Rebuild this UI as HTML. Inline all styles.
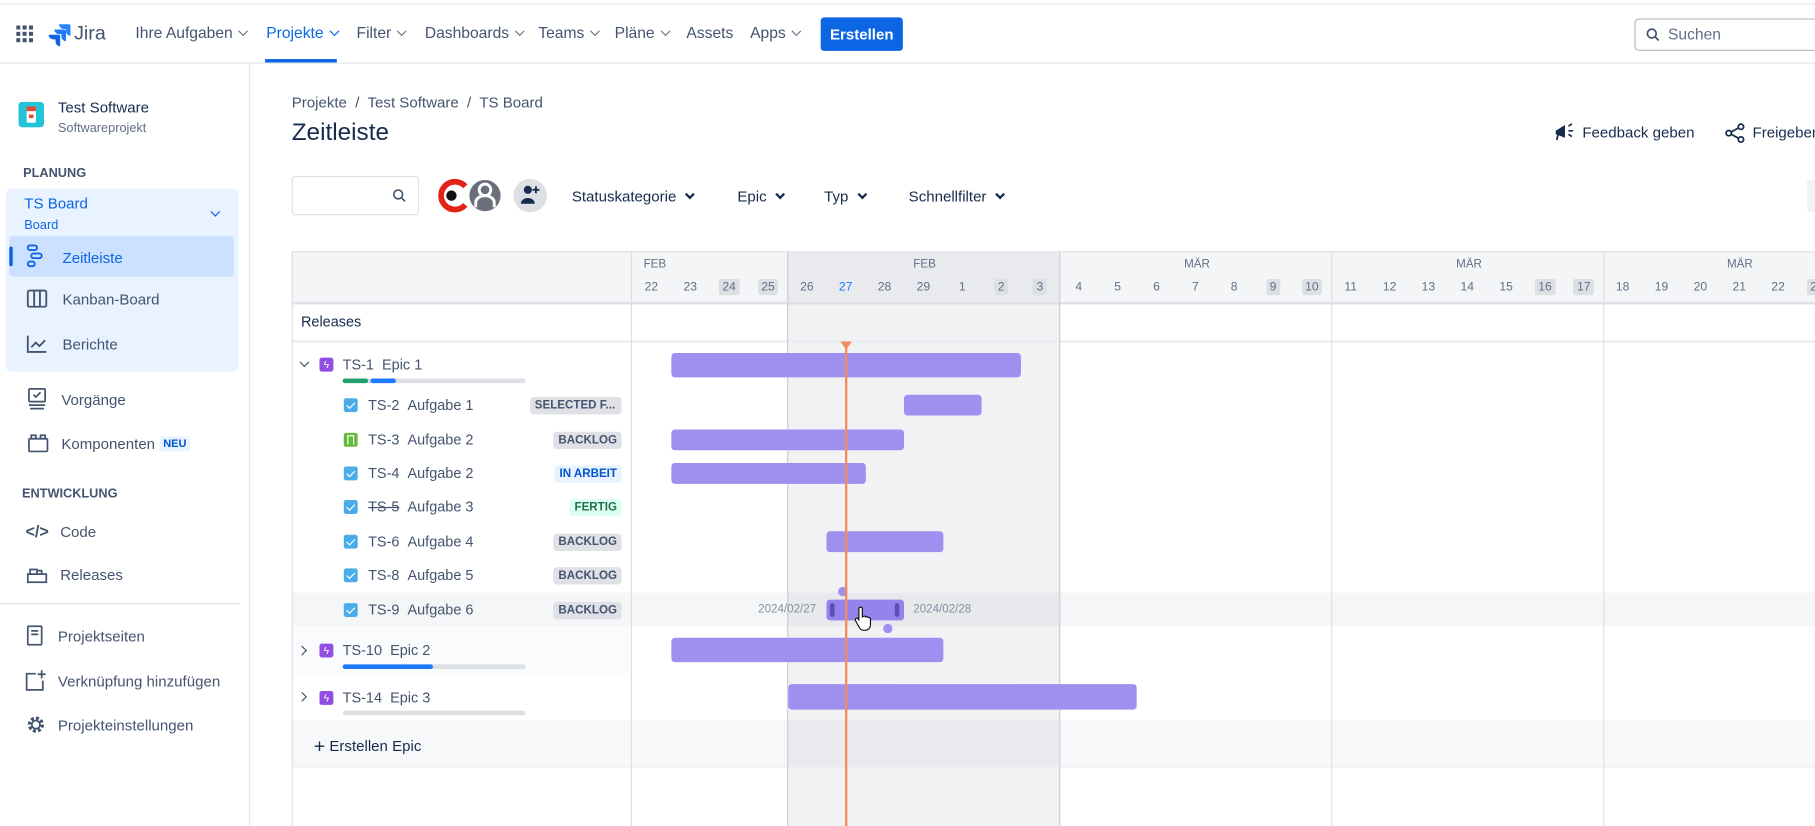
<!DOCTYPE html>
<html><head><meta charset="utf-8">
<style>
*{box-sizing:border-box;margin:0;padding:0}
html,body{width:1815px;height:826px;overflow:hidden;background:#fff}
#s{position:absolute;left:0;top:0;width:1568px;height:714px;transform:scale(1.15753);transform-origin:0 0;font-family:"Liberation Sans",sans-serif;color:#44546f;font-size:13px}
.a{position:absolute;white-space:nowrap}
.nav{top:21px;font-size:13.5px;color:#44546f}
.chev{display:inline-block;width:6px;height:6px;border-right:1.3px solid #6b778c;border-bottom:1.3px solid #6b778c;transform:rotate(45deg);margin-left:6px;position:relative;top:-3px}
.ch{position:absolute;width:6px;height:6px;border-right:1.8px solid #44546f;border-bottom:1.8px solid #44546f;transform:rotate(45deg)}
.sb{font-size:13px;color:#44546f}
.days{position:absolute;left:546px;top:240px;display:flex}
.days span{width:33.57px;text-align:center;font-size:10.5px;color:#626f86;line-height:17px}
.days span.w b{background:#dcdfe4;font-weight:normal;padding:1px 3px;border-radius:2px}
.vl{position:absolute;top:217px;width:1px;height:497px;background:#dcdfe4}
.bar{position:absolute;background:#9f8fef;border-radius:3px}
.tk{position:absolute;left:297px;width:12px;height:12px;background:#4bade8;border-radius:2px}
.tk:after{content:"";position:absolute;left:4px;top:1.5px;width:3px;height:6px;border-right:1.6px solid #fff;border-bottom:1.6px solid #fff;transform:rotate(45deg)}
.tt{position:absolute;left:318px;font-size:12.5px;color:#44546f}
.bd{position:absolute;right:1031px;font-size:10px;font-weight:bold;background:#dfe1e6;color:#44546f;padding:2px 4px;border-radius:3px}
.ep{position:absolute;left:276px;width:12px;height:12px;background:#904ee2;border-radius:2px;color:#fff;font-size:9px;text-align:center;line-height:12px}
.pg{position:absolute;left:296px;width:158px;height:4px;background:#dcdfe4;border-radius:2px}
</style></head><body><div id="s">
<div class="a" style="left:0;top:3px;width:1568px;height:1px;background:#e4e6ea"></div>
<div class="a" style="left:0;top:54px;width:1568px;height:1px;background:#e4e6ea"></div>
<svg class="a" style="left:14px;top:22px" width="15" height="15"><g fill="#44546f"><rect x="0" y="0" width="3.5" height="3.5"/><rect x="5.5" y="0" width="3.5" height="3.5"/><rect x="11" y="0" width="3.5" height="3.5"/><rect x="0" y="5.5" width="3.5" height="3.5"/><rect x="5.5" y="5.5" width="3.5" height="3.5"/><rect x="11" y="5.5" width="3.5" height="3.5"/><rect x="0" y="11" width="3.5" height="3.5"/><rect x="5.5" y="11" width="3.5" height="3.5"/><rect x="11" y="11" width="3.5" height="3.5"/></g></svg>
<svg class="a" style="left:41px;top:20px" width="20" height="20" viewBox="0 0 20 20"><path d="M19 1H10a4 4 0 0 0 4 4h2v2a4 4 0 0 0 4 4V2z" fill="#2684ff"/><path d="M14.5 5.5H6a4 4 0 0 0 4 4h2v2a4 4 0 0 0 4 4V6z" fill="#1d7afc"/><path d="M10 10H1a4 4 0 0 0 4 4h2v2a4 4 0 0 0 4 4V11z" fill="#0c66e4"/></svg>
<div class="a" style="left:64px;top:19px;font-size:17px;color:#44546f">Jira</div>
<div class="a nav" style="left:117px">Ihre Aufgaben<i class="chev"></i></div>
<div class="a nav" style="left:230px;color:#0c66e4">Projekte<i class="chev" style="border-color:#0c66e4"></i></div>
<div class="a" style="left:229px;top:51px;width:62px;height:3px;background:#0c66e4"></div>
<div class="a nav" style="left:308px">Filter<i class="chev"></i></div>
<div class="a nav" style="left:367px">Dashboards<i class="chev"></i></div>
<div class="a nav" style="left:465px">Teams<i class="chev"></i></div>
<div class="a nav" style="left:531px">Pläne<i class="chev"></i></div>
<div class="a nav" style="left:593px">Assets</div>
<div class="a nav" style="left:648px">Apps<i class="chev"></i></div>
<div class="a" style="left:709px;top:15px;width:71px;height:29px;background:#0c66e4;border-radius:3px;color:#fff;font-weight:bold;font-size:13px;text-align:center;line-height:29px">Erstellen</div>
<div class="a" style="left:1412px;top:16px;width:170px;height:28px;border:1.5px solid #b3b9c4;border-radius:4px"></div>
<svg class="a" style="left:1422px;top:24px" width="12" height="12"><circle cx="5" cy="5" r="3.8" fill="none" stroke="#44546f" stroke-width="1.5"/><line x1="8" y1="8" x2="11" y2="11" stroke="#44546f" stroke-width="1.5"/></svg>
<div class="a" style="left:1441px;top:22px;font-size:13.5px;color:#626f86">Suchen</div>

<div class="a" style="left:215px;top:55px;width:1px;height:659px;background:#e4e6ea"></div>
<svg class="a" style="left:16px;top:88px" width="22" height="22"><rect width="22" height="22" rx="3" fill="#22c4d8"/><rect x="7" y="4" width="8" height="14" rx="1" fill="#fff"/><rect x="7" y="4" width="8" height="4" fill="#e34935"/><rect x="9" y="11" width="4" height="3" fill="#e34935"/></svg>
<div class="a" style="left:50px;top:85px;font-size:13px;color:#172b4d">Test Software</div>
<div class="a" style="left:50px;top:105px;font-size:11px;color:#626f86">Softwareprojekt</div>
<div class="a" style="left:20px;top:144px;font-size:11px;font-weight:bold;color:#44546f">PLANUNG</div>
<div class="a" style="left:5px;top:163px;width:201px;height:158px;background:#e9f2ff;border-radius:5px"></div>
<div class="a" style="left:21px;top:168px;font-size:13px;color:#0c66e4">TS Board</div>
<div class="a" style="left:21px;top:189px;font-size:11px;color:#0c66e4">Board</div>
<i class="ch" style="left:183px;top:180px;border-color:#0c66e4"></i>
<div class="a" style="left:8px;top:204px;width:194px;height:35px;background:#cce0ff;border-radius:3px"></div>
<div class="a" style="left:8px;top:213px;width:3px;height:17px;background:#0c66e4;border-radius:2px"></div>
<svg class="a" style="left:23px;top:211px" width="16" height="20"><g fill="none" stroke="#0c66e4" stroke-width="1.6"><rect x="1" y="1" width="8" height="4" rx="2"/><rect x="4" y="8" width="9" height="4" rx="2"/><rect x="1" y="15" width="6" height="4" rx="2"/></g></svg>
<div class="a sb" style="left:54px;top:215px;color:#0c66e4">Zeitleiste</div>
<svg class="a" style="left:23px;top:250px" width="18" height="16"><g fill="none" stroke="#44546f" stroke-width="1.6"><rect x="1" y="1" width="16" height="14" rx="1.5"/><line x1="6.5" y1="1" x2="6.5" y2="15"/><line x1="11.5" y1="1" x2="11.5" y2="15"/></g></svg>
<div class="a sb" style="left:54px;top:251px">Kanban-Board</div>
<svg class="a" style="left:23px;top:289px" width="18" height="16"><g fill="none" stroke="#44546f" stroke-width="1.6"><path d="M1 1v14h16"/><path d="M4 11l4-4 3 3 5-5"/></g></svg>
<div class="a sb" style="left:54px;top:290px">Berichte</div>
<svg class="a" style="left:24px;top:335px" width="16" height="20"><g fill="none" stroke="#44546f" stroke-width="1.5"><rect x="1" y="1" width="14" height="11" rx="1"/><path d="M5 6l2 2 4-4"/><line x1="1" y1="15" x2="15" y2="15"/><line x1="2" y1="18" x2="14" y2="18"/></g></svg>
<div class="a sb" style="left:53px;top:338px">Vorgänge</div>
<svg class="a" style="left:24px;top:375px" width="18" height="16"><g fill="none" stroke="#44546f" stroke-width="1.5"><rect x="1" y="4" width="16" height="11" rx="1"/><rect x="3" y="1" width="4" height="3"/><rect x="11" y="1" width="4" height="3"/></g></svg>
<div class="a sb" style="left:53px;top:376px">Komponenten</div>
<div class="a" style="left:138px;top:377px;font-size:9.5px;font-weight:bold;color:#0055cc;background:#e9f2ff;padding:1px 3px;border-radius:2px">NEU</div>
<div class="a" style="left:19px;top:421px;font-size:11px;font-weight:bold;color:#44546f">ENTWICKLUNG</div>
<div class="a" style="left:22px;top:451px;font-size:14px;color:#44546f;font-weight:bold">&lt;/&gt;</div>
<div class="a sb" style="left:52px;top:452px">Code</div>
<svg class="a" style="left:23px;top:488px" width="18" height="16"><g fill="none" stroke="#44546f" stroke-width="1.5"><path d="M1 8h16v7H1z"/><path d="M3 8V4h6v4"/><path d="M9 5h4v3"/></g></svg>
<div class="a sb" style="left:52px;top:489px">Releases</div>
<div class="a" style="left:0;top:521px;width:207px;height:1px;background:#dcdfe4"></div>
<svg class="a" style="left:23px;top:540px" width="14" height="18"><g fill="none" stroke="#44546f" stroke-width="1.5"><rect x="1" y="1" width="12" height="16" rx="1"/><line x1="4" y1="5" x2="10" y2="5"/><line x1="4" y1="8" x2="10" y2="8"/></g></svg>
<div class="a sb" style="left:50px;top:542px">Projektseiten</div>
<svg class="a" style="left:21px;top:578px" width="20" height="20"><g fill="none" stroke="#44546f" stroke-width="1.5"><path d="M10 4H2v14h14v-8"/><path d="M15 1v7M11.5 4.5h7"/></g></svg>
<div class="a sb" style="left:50px;top:581px">Verknüpfung hinzufügen</div>
<svg class="a" style="left:22px;top:617px" width="18" height="18"><circle cx="9" cy="9" r="5.5" fill="none" stroke="#44546f" stroke-width="3" stroke-dasharray="2.5 1.8"/><circle cx="9" cy="9" r="3.5" fill="none" stroke="#44546f" stroke-width="1.5"/></svg>
<div class="a sb" style="left:50px;top:619px">Projekteinstellungen</div>

<div class="a" style="left:252px;top:81px;font-size:13px;color:#44546f">Projekte &nbsp;/&nbsp; Test Software &nbsp;/&nbsp; TS Board</div>
<div class="a" style="left:252px;top:103px;font-size:21px;color:#172b4d">Zeitleiste</div>
<svg class="a" style="left:1342px;top:106px" width="20" height="17"><path d="M2 7l8-5v11L2 10z" fill="#172b4d"/><path d="M4 10l-1 5" stroke="#172b4d" stroke-width="1.5"/><path d="M13 3l3-2M13 7h4M13 10l3 2" stroke="#172b4d" stroke-width="1.4"/></svg>
<div class="a" style="left:1367px;top:107px;font-size:13px;color:#172b4d">Feedback geben</div>
<svg class="a" style="left:1490px;top:106px" width="18" height="18"><g fill="none" stroke="#172b4d" stroke-width="1.5"><circle cx="14" cy="3.5" r="2.3"/><circle cx="3.5" cy="9" r="2.3"/><circle cx="14" cy="14.5" r="2.3"/><path d="M5.5 8l6.5-3.5M5.5 10l6.5 3.5"/></g></svg>
<div class="a" style="left:1514px;top:107px;font-size:13px;color:#172b4d">Freigeben</div>

<div class="a" style="left:252px;top:152px;width:110px;height:34px;border:1.5px solid #dcdfe4;border-radius:3px"></div>
<svg class="a" style="left:339px;top:163px" width="12" height="12"><circle cx="5" cy="5" r="3.8" fill="none" stroke="#44546f" stroke-width="1.4"/><line x1="8" y1="8" x2="11" y2="11" stroke="#44546f" stroke-width="1.4"/></svg>
<svg class="a" style="left:374px;top:153px" width="100" height="32"><path d="M28 8A12 12 0 1 0 28 24" fill="none" stroke="#e2231a" stroke-width="5"/><circle cx="16" cy="16" r="4.5" fill="#111"/><circle cx="45" cy="16" r="15" fill="#fff"/><circle cx="45" cy="16" r="13.5" fill="#6b6f7c"/><circle cx="45" cy="11" r="5" fill="none" stroke="#fff" stroke-width="2.5"/><path d="M37 26v-4a8 6 0 0 1 16 0v4" fill="none" stroke="#fff" stroke-width="2.5"/><circle cx="84" cy="16" r="14.5" fill="#dcdfe4"/><circle cx="82" cy="11" r="3.5" fill="#172b4d"/><path d="M76 23a6 5 0 0 1 12 0z" fill="#172b4d"/><path d="M89 8v6M86 11h6" stroke="#172b4d" stroke-width="1.6"/></svg>
<div class="a" style="left:494px;top:162px;font-size:13px;color:#172b4d">Statuskategorie<i class="chev" style="border-color:#172b4d;margin-left:9px;border-width:2px"></i></div>
<div class="a" style="left:637px;top:162px;font-size:13px;color:#172b4d">Epic<i class="chev" style="border-color:#172b4d;margin-left:9px;border-width:2px"></i></div>
<div class="a" style="left:712px;top:162px;font-size:13px;color:#172b4d">Typ<i class="chev" style="border-color:#172b4d;margin-left:9px;border-width:2px"></i></div>
<div class="a" style="left:785px;top:162px;font-size:13px;color:#172b4d">Schnellfilter<i class="chev" style="border-color:#172b4d;margin-left:9px;border-width:2px"></i></div>
<div class="a" style="left:1561px;top:155px;width:10px;height:28px;background:#f1f2f4;border-radius:3px"></div>

<div class="a" style="left:252px;top:217px;width:1316px;height:45px;background:#f4f5f7;border-top:1px solid #dcdfe4;border-left:1px solid #dcdfe4"></div>
<div class="a" style="left:680px;top:217px;width:235px;height:45px;background:#e9eaee"></div>
<div class="a" style="left:680px;top:262px;width:235px;height:452px;background:#f1f2f4"></div>
<div class="a" style="left:252px;top:512px;width:1316px;height:29px;background:rgba(9,30,66,0.04)"></div>
<div class="a" style="left:252px;top:541px;width:293px;height:41px;background:#fafbfc"></div>
<div class="a" style="left:252px;top:622px;width:1316px;height:40px;background:rgba(9,30,66,0.03)"></div>
<div class="a" style="left:252px;top:261px;width:1316px;height:1.5px;background:#dcdfe4"></div>
<div class="a" style="left:252px;top:294px;width:1316px;height:1.5px;background:#ebecf0"></div>
<div class="a" style="left:252px;top:662px;width:1316px;height:1px;background:#ebecf0"></div>
<div class="a" style="left:252px;top:217px;width:1px;height:497px;background:#dcdfe4"></div>
<div class="vl" style="left:545px"></div>
<div class="vl" style="left:680px;background:#c9ccd3"></div>
<div class="vl" style="left:915px;background:#c9ccd3"></div>
<div class="vl" style="left:1150px"></div>
<div class="vl" style="left:1385px"></div>

<div class="a" style="left:556px;top:223px;font-size:10px;color:#626f86">FEB</div>
<div class="a" style="left:789px;top:223px;font-size:10px;color:#626f86">FEB</div>
<div class="a" style="left:1023px;top:223px;font-size:10px;color:#626f86">MÄR</div>
<div class="a" style="left:1258px;top:223px;font-size:10px;color:#626f86">MÄR</div>
<div class="a" style="left:1492px;top:223px;font-size:10px;color:#626f86">MÄR</div>
<div class="days"><span>22</span><span>23</span><span class="w"><b>24</b></span><span class="w"><b>25</b></span><span>26</span><span style="color:#1d7afc">27</span><span>28</span><span>29</span><span>1</span><span class="w"><b>2</b></span><span class="w"><b>3</b></span><span>4</span><span>5</span><span>6</span><span>7</span><span>8</span><span class="w"><b>9</b></span><span class="w"><b>10</b></span><span>11</span><span>12</span><span>13</span><span>14</span><span>15</span><span class="w"><b>16</b></span><span class="w"><b>17</b></span><span>18</span><span>19</span><span>20</span><span>21</span><span>22</span><span class="w"><b>23</b></span></div>

<div class="a" style="left:260px;top:271px;font-size:12.5px;color:#172b4d">Releases</div>

<i class="ch" style="left:260px;top:310px"></i>
<div class="ep" style="top:309px">ϟ</div>
<div class="a" style="left:296px;top:308px;font-size:12.5px">TS-1 &nbsp;Epic 1</div>
<div class="pg" style="top:327px"></div>
<div class="a" style="left:296px;top:327px;width:22px;height:4px;background:#22a06b;border-radius:2px"></div>
<div class="a" style="left:320px;top:327px;width:22px;height:4px;background:#1d7afc;border-radius:2px"></div>

<div class="tk" style="top:344px"></div><div class="tt" style="top:343px">TS-2 &nbsp;Aufgabe 1</div><div class="bd" style="top:343px;width:79px">SELECTED F...</div>
<div class="a" style="left:297px;top:374px;width:12px;height:12px;background:#63ba3c;border-radius:2px"><div style="position:absolute;left:3px;top:2px;width:6px;height:8px;border:1.5px solid #fff;border-bottom:none"></div></div>
<div class="tt" style="top:373px">TS-3 &nbsp;Aufgabe 2</div><div class="bd" style="top:373px">BACKLOG</div>
<div class="tk" style="top:403px"></div><div class="tt" style="top:402px">TS-4 &nbsp;Aufgabe 2</div><div class="bd" style="top:402px;background:#e9f2ff;color:#0055cc">IN ARBEIT</div>
<div class="tk" style="top:432px"></div><div class="tt" style="top:431px"><s>TS-5</s> &nbsp;Aufgabe 3</div><div class="bd" style="top:431px;background:#dcfff1;color:#216e4e">FERTIG</div>
<div class="tk" style="top:462px"></div><div class="tt" style="top:461px">TS-6 &nbsp;Aufgabe 4</div><div class="bd" style="top:461px">BACKLOG</div>
<div class="tk" style="top:491px"></div><div class="tt" style="top:490px">TS-8 &nbsp;Aufgabe 5</div><div class="bd" style="top:490px">BACKLOG</div>
<div class="tk" style="top:521px"></div><div class="tt" style="top:520px">TS-9 &nbsp;Aufgabe 6</div><div class="bd" style="top:520px">BACKLOG</div>

<i class="ch" style="left:258px;top:559px;transform:rotate(-45deg)"></i>
<div class="ep" style="top:556px">ϟ</div>
<div class="a" style="left:296px;top:555px;font-size:12.5px">TS-10 &nbsp;Epic 2</div>
<div class="pg" style="top:574px"></div>
<div class="a" style="left:296px;top:574px;width:78px;height:4px;background:#1d7afc;border-radius:2px"></div>

<i class="ch" style="left:258px;top:599px;transform:rotate(-45deg)"></i>
<div class="ep" style="top:597px">ϟ</div>
<div class="a" style="left:296px;top:596px;font-size:12.5px">TS-14 &nbsp;Epic 3</div>
<div class="pg" style="top:614px"></div>

<div class="a" style="left:271px;top:634px;font-size:13px;color:#172b4d"><span style="font-size:17px;position:relative;top:1px">+</span> Erstellen Epic</div>

<div class="bar" style="left:580px;top:305px;width:302px;height:21px"></div>
<div class="bar" style="left:781px;top:341px;width:67px;height:18px"></div>
<div class="bar" style="left:580px;top:371px;width:201px;height:18px"></div>
<div class="bar" style="left:580px;top:400px;width:168px;height:18px"></div>
<div class="bar" style="left:714px;top:459px;width:101px;height:18px"></div>
<div class="bar" style="left:714px;top:518px;width:67px;height:18px;background:#9583ec"></div>
<div class="a" style="left:717px;top:521px;width:4px;height:12px;background:#5e4db2;border-radius:2px"></div>
<div class="a" style="left:773px;top:521px;width:4px;height:12px;background:#5e4db2;border-radius:2px"></div>
<div class="a" style="left:724px;top:507px;width:8px;height:8px;background:#9f8fef;border-radius:50%"></div>
<div class="a" style="left:763px;top:539px;width:8px;height:8px;background:#9f8fef;border-radius:50%"></div>
<div class="a" style="left:655px;top:521px;font-size:10px;color:#8590a2">2024/02/27</div>
<div class="a" style="left:789px;top:521px;font-size:10px;color:#8590a2">2024/02/28</div>
<div class="bar" style="left:580px;top:551px;width:235px;height:21px"></div>
<div class="bar" style="left:681px;top:591px;width:301px;height:22px"></div>

<div class="a" style="left:730px;top:296px;width:1.5px;height:418px;background:#f18d5a"></div>
<div class="a" style="left:726px;top:295px;width:0;height:0;border-left:5px solid transparent;border-right:5px solid transparent;border-top:7px solid #f18d5a"></div>
<svg class="a" style="left:738px;top:524px" width="16" height="22"><path d="M4 2a1.5 1.5 0 0 1 3 0v7l1-.5a1.5 1.5 0 0 1 2 .5 1.5 1.5 0 0 1 2 .5 1.5 1.5 0 0 1 2 1v5c0 3-2 5-5 5H8c-2 0-3-1-4-3L1 12a1.5 1.5 0 0 1 2.5-1.5L4 12z" fill="#fff" stroke="#111" stroke-width="1"/></svg>
</div></body></html>
